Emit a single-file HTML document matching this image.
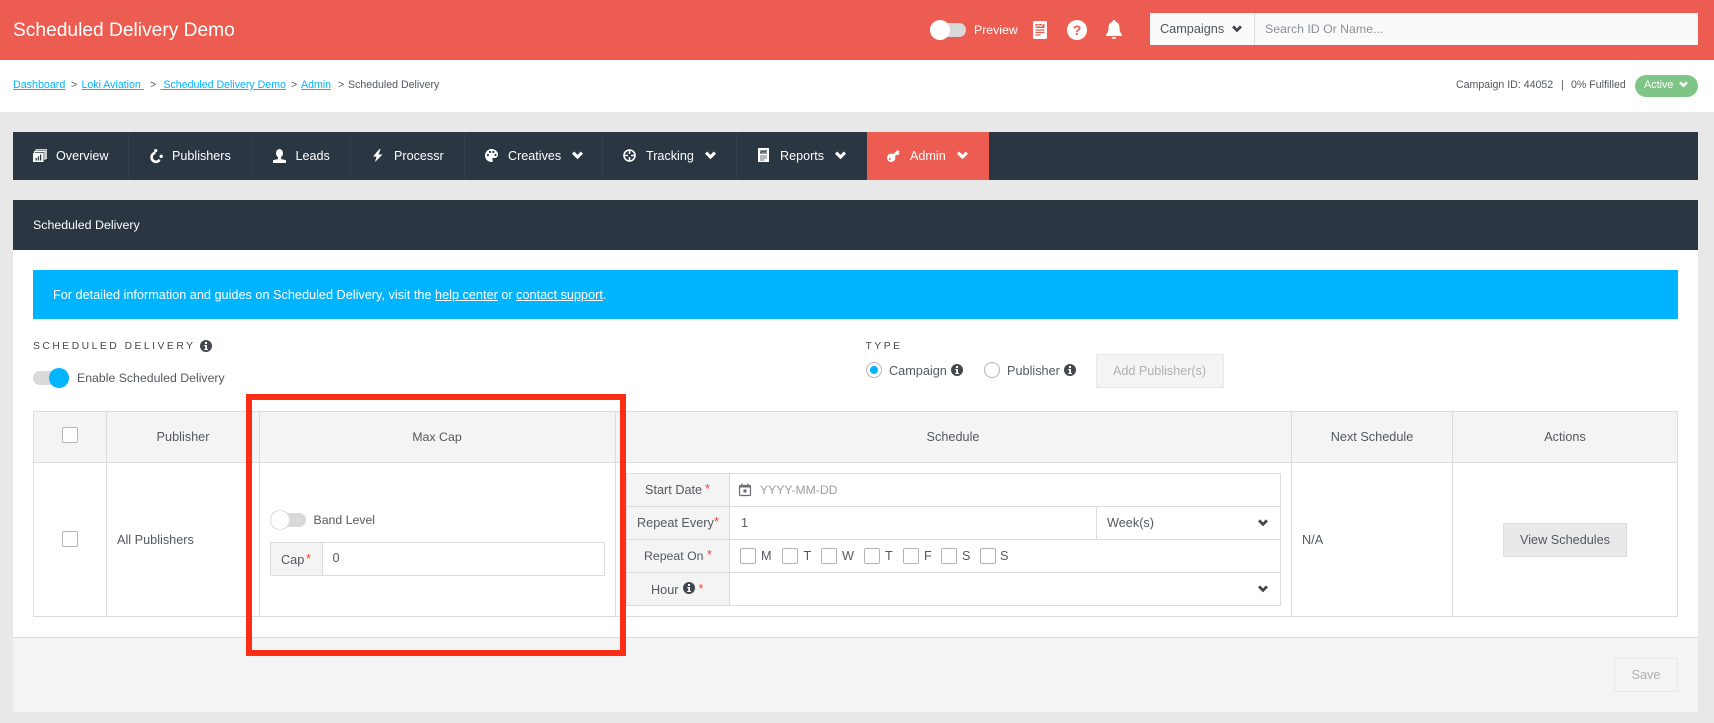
<!DOCTYPE html>
<html><head><meta charset="utf-8"><title>Scheduled Delivery</title>
<style>
html,body{margin:0;padding:0;width:1714px;height:723px;overflow:hidden;background:#e8e8e8;font-family:"Liberation Sans",sans-serif;color:#54595f;font-size:12.7px}
div,span,a,svg{position:absolute;box-sizing:border-box}
.t{white-space:nowrap;line-height:20px;height:20px}
a.t,.t a{color:inherit}
.n{color:#fff;top:146px;font-size:12.6px}
.b{font-size:10.6px;top:75px}
.b.l{color:#00b4ff;text-decoration:underline}
.h{top:427px}
.c{transform:translateX(-50%)}
.r{color:#ff3b30}
.cb{width:16px;height:16px;border:1px solid #b5b5b5;border-radius:2px;background:#fff}
.sep{top:132px;width:1px;height:48px;background:#333f4c}
.line{background:#dcdcdc}
svg{overflow:visible}
</style></head><body>
<svg width="0" height="0" style="left:0;top:0">
<defs>
<symbol id="chev" viewBox="0 0 10 8"><polygon points="0,2.400 2,0.400 5,3.400 8,0.400 10,2.400 5,7.400" fill="currentColor"/></symbol>
<symbol id="info" viewBox="0 0 12 12"><circle cx="6" cy="6" r="6" fill="currentColor"/><rect x="5" y="2" width="2" height="2" fill="#fff"/><path d="M4.200 5h2.800v4h1v1H4.200V9h1V6h-1z" fill="#fff"/></symbol>
</defs></svg>

<!-- header -->
<div style="left:0;top:0;width:1714px;height:60px;background:#ec5c50"></div>
<div class="t" style="left:13px;top:21px;font-size:19.200px;color:#fff">Scheduled Delivery Demo</div>
<div style="left:930px;top:23px;width:36px;height:14px;border-radius:7px;background:#d9d9d9"></div>
<div style="left:930px;top:20px;width:20px;height:20px;border-radius:50%;background:#fff"></div>
<div class="t" style="left:974px;top:20px;color:#fff;font-size:12.300px">Preview</div>
<svg style="left:1033px;top:21px" width="14" height="18" viewBox="0 0 14 18"><rect width="14" height="18" rx="1.500" fill="#fff"/><path d="M2.500 3h9v4h-9z" fill="#ec5c50"/><path d="M3 6l2.500-2 2 1.500L10 3.500" stroke="#fff" fill="none"/><path d="M2.500 9h9M2.500 11.500h9M2.500 14h5" stroke="#ec5c50" stroke-width="1.200"/></svg>
<svg style="left:1067px;top:20px" width="20" height="20" viewBox="0 0 20 20"><circle cx="10" cy="10" r="10" fill="#fff"/><text x="10" y="15" text-anchor="middle" font-family="Liberation Sans" font-weight="bold" font-size="14" fill="#ec5c50">?</text></svg>
<svg style="left:1106px;top:20px" width="16" height="20" viewBox="0 0 16 20"><path d="M8 0a1.500 1.500 0 0 1 1.500 1.800C12.500 2.500 13.500 5 13.500 8c0 3.500 1 5 2.500 6.500V16H0v-1.500C1.500 13 2.500 11.500 2.500 8c0-3 1-5.500 4-6.200A1.500 1.500 0 0 1 8 0z" fill="#fff"/><path d="M5.800 17h4.400a2.200 2.200 0 0 1-4.400 0z" fill="#fff"/></svg>

<div style="left:1150px;top:13px;width:548px;height:32px;background:#fafafa"></div>
<div style="left:1254px;top:13px;width:1px;height:32px;background:#dcdcdc"></div>
<div class="t" style="left:1160px;top:19px;font-size:12.700px;color:#50555b">Campaigns</div>
<svg style="left:1232px;top:25px;color:#44484e" width="10" height="8"><use href="#chev" width="10" height="8"/></svg>
<div class="t" style="left:1265px;top:19px;font-size:12.300px;color:#8b8f96">Search ID Or Name...</div>

<!-- breadcrumb bar -->
<div style="left:0;top:60px;width:1714px;height:52px;background:#fff"></div>
<a class="t b l" style="left:13px;font-size:10.700px">Dashboard</a>
<div class="t b" style="left:71px">&gt;</div>
<a class="t b l" style="left:81.500px">Loki Aviation&nbsp;</a>
<div class="t b" style="left:150px">&gt;</div>
<a class="t b l" style="left:160.500px">&nbsp;Scheduled Delivery Demo</a>
<div class="t b" style="left:291px">&gt;</div>
<a class="t b l" style="left:301px">Admin</a>
<div class="t b" style="left:338px">&gt;</div>
<div class="t b" style="left:348px">Scheduled Delivery</div>
<div class="t b" style="left:1456px">Campaign ID: 44052</div>
<div class="t b" style="left:1561px">|</div>
<div class="t b" style="left:1571px">0% Fulfilled</div>
<div style="left:1635px;top:75px;width:63px;height:22px;border-radius:11px;background:#7fc587"></div>
<div class="t b" style="left:1644px;color:#fff;font-size:10.800px">Active</div>
<svg style="left:1679px;top:81px;color:#fff" width="9" height="7"><use href="#chev" width="9" height="7"/></svg>

<!-- nav -->
<div style="left:13px;top:132px;width:1685px;height:48px;background:#2a3642"></div>
<div class="sep" style="left:128px"></div><div class="sep" style="left:251px"></div><div class="sep" style="left:350px"></div><div class="sep" style="left:464px"></div><div class="sep" style="left:602px"></div><div class="sep" style="left:736px"></div>
<div style="left:867px;top:132px;width:122px;height:48px;background:#ec5c50"></div>

<svg style="left:33px;top:149px" width="14" height="13" viewBox="0 0 14 13"><path d="M3 2.500V.5h10.500v9H11.500" fill="#8d949b" stroke="#c9cdd1" stroke-width="1"/><path d="M1.500 4V2.500H12V11" fill="#5f6871" stroke="#fff" stroke-width="1"/><rect x="0" y="4" width="10.500" height="9" fill="#fff"/><path d="M2.500 9h1.300v2.500H2.500zM4.800 7.500h1.300v4H4.800zM7 5.500h1.300v6H7z" fill="#2a3642"/></svg>
<div class="t n" style="left:56px">Overview</div>
<svg style="left:150px;top:149px" width="13" height="14" viewBox="0 0 13 14"><path d="M4.800 3.800C2.800 4.600 1.600 6.300 1.600 8.400c0 2.700 2 4.400 4.300 4.400 1.700 0 3-.9 3.500-2.300" fill="none" stroke="#fff" stroke-width="2.600"/><circle cx="5.800" cy="1.600" r="1.600" fill="#fff"/><path d="M4.800 2v3" stroke="#fff" stroke-width="1.400"/><circle cx="11.200" cy="7.300" r="1.700" fill="#fff"/></svg>
<div class="t n" style="left:172px">Publishers</div>
<svg style="left:273px;top:149px" width="13" height="14" viewBox="0 0 13 14"><ellipse cx="6.500" cy="4.300" rx="3.500" ry="4.300" fill="#fff"/><path d="M5 8h3v2l5 1.300V14H0v-2.700l5-1.300z" fill="#fff"/></svg>
<div class="t n" style="left:295.500px">Leads</div>
<svg style="left:372px;top:149px" width="11" height="13" viewBox="0 0 11 13"><path d="M7.500 0L1 7.500h3.500L3 13l7.500-7.500H6.500L8.500 0z" fill="#fff"/></svg>
<div class="t n" style="left:394px">Processr</div>
<svg style="left:485px;top:149px" width="13" height="13" viewBox="0 0 13 13"><path d="M6.500 0C10 0 13 2.500 13 5.700c0 2-1.600 3.300-3.500 3.300H8.300c-.7 0-1 .5-1 1 0 .7.500 1 .5 1.700 0 .8-.6 1.300-1.300 1.300C2.900 13 0 10 0 6.500S2.900 0 6.500 0z" fill="#fff"/><circle cx="3" cy="6" r="1.100" fill="#2a3642"/><circle cx="5" cy="3" r="1.100" fill="#2a3642"/><circle cx="8.300" cy="3" r="1.100" fill="#2a3642"/><circle cx="10.500" cy="6" r="1.100" fill="#2a3642"/></svg>
<div class="t n" style="left:508px">Creatives</div>
<svg style="left:572px;top:151px;color:#fff" width="11" height="9"><use href="#chev" width="11" height="9"/></svg>
<svg style="left:623px;top:149px" width="13" height="13" viewBox="0 0 13 13"><circle cx="6.500" cy="6.500" r="5.500" fill="none" stroke="#fff" stroke-width="1.600"/><path d="M6.500 1.500v3.500M6.500 8v3.500M1.500 6.500h3.500M8 6.500h3.500" stroke="#fff" stroke-width="1.500"/></svg>
<div class="t n" style="left:646px">Tracking</div>
<svg style="left:705px;top:151px;color:#fff" width="11" height="9"><use href="#chev" width="11" height="9"/></svg>
<svg style="left:758px;top:148px" width="11" height="14" viewBox="0 0 11 14"><rect width="11" height="14" fill="#fff"/><rect x="2" y="2" width="7" height="4" fill="#8d949b"/><path d="M2.500 5l2-2 1.500 1.200L8.500 2.500" fill="none" stroke="#2a3642" stroke-width=".7"/><path d="M2 8h7M2 10h7M2 12h4.500" stroke="#6a727a" stroke-width="1"/></svg>
<div class="t n" style="left:780px">Reports</div>
<svg style="left:835px;top:151px;color:#fff" width="11" height="9"><use href="#chev" width="11" height="9"/></svg>
<svg style="left:887px;top:149px" width="13" height="13" viewBox="0 0 13 13"><circle cx="4.200" cy="8.800" r="4.200" fill="#fff"/><path d="M5 6.500L10.500 1l2.300 1.500-1.200 1.500.8 1-1.400 1.200-1-.7L7 8z" fill="#fff"/><circle cx="2.800" cy="10" r="1" fill="#ec5c50"/></svg>
<div class="t n" style="left:910px">Admin</div>
<svg style="left:957px;top:151px;color:#fff" width="11" height="9"><use href="#chev" width="11" height="9"/></svg>

<!-- panel -->
<div style="left:13px;top:200px;width:1685px;height:50px;background:#2a3642"></div>
<div class="t" style="left:33px;top:215px;color:#fff;font-size:12.400px">Scheduled Delivery</div>
<div style="left:13px;top:250px;width:1685px;height:387px;background:#fff"></div>
<div style="left:33px;top:270px;width:1645px;height:49px;background:#00b4ff"></div>
<div class="t" style="left:53px;top:284.500px;color:#fff;font-size:12.700px">For detailed information and guides on Scheduled Delivery, visit the <a style="position:static;text-decoration:underline">help center</a> or <a style="position:static;text-decoration:underline">contact support</a>.</div>

<div class="t" style="left:33px;top:337px;font-size:10.300px;letter-spacing:2.520px;color:#44484e">SCHEDULED DELIVERY</div>
<svg style="left:200px;top:340px;color:#44484e" width="12" height="12"><use href="#info" width="12" height="12"/></svg>
<div style="left:33px;top:371px;width:36px;height:14px;border-radius:7px;background:#d9d9d9"></div>
<div style="left:49px;top:368px;width:20px;height:20px;border-radius:50%;background:#00b4ff"></div>
<div class="t" style="left:77px;top:368px;font-size:12.300px">Enable Scheduled Delivery</div>

<div class="t" style="left:865.500px;top:337px;font-size:10.300px;letter-spacing:2.520px;color:#44484e">TYPE</div>
<div style="left:866px;top:362px;width:16px;height:16px;border-radius:50%;border:1px solid #b5b5b5;background:#fff"></div>
<div style="left:870px;top:366px;width:8px;height:8px;border-radius:50%;background:#00b4ff"></div>
<div class="t" style="left:889px;top:361px">Campaign</div>
<svg style="left:951px;top:364px;color:#44484e" width="12" height="12"><use href="#info" width="12" height="12"/></svg>
<div style="left:983.500px;top:362px;width:16px;height:16px;border-radius:50%;border:1px solid #b5b5b5;background:#fff"></div>
<div class="t" style="left:1007px;top:361px">Publisher</div>
<svg style="left:1063.500px;top:364px;color:#44484e" width="12" height="12"><use href="#info" width="12" height="12"/></svg>
<div style="left:1096px;top:354px;width:128px;height:34px;background:#f4f4f4;border:1px solid #e8e8e8"></div>
<div class="t" style="left:1113px;top:361px;color:#aeb0b3;font-size:12.600px">Add Publisher(s)</div>

<!-- table -->
<div style="left:33px;top:411px;width:1645px;height:206px;border:1px solid #dcdcdc;background:#fff"></div>
<div style="left:34px;top:412px;width:1643px;height:51px;background:#f4f4f4;border-bottom:1px solid #dcdcdc"></div>
<div class="line" style="left:106px;top:411px;width:1px;height:206px"></div>
<div class="line" style="left:259px;top:411px;width:1px;height:206px"></div>
<div class="line" style="left:615px;top:411px;width:1px;height:206px"></div>
<div class="line" style="left:1291px;top:411px;width:1px;height:206px"></div>
<div class="line" style="left:1452px;top:411px;width:1px;height:206px"></div>
<div class="cb" style="left:62px;top:427px"></div>
<div class="t h c" style="left:183px">Publisher</div>
<div class="t h c" style="left:437px;font-size:12.400px">Max Cap</div>
<div class="t h c" style="left:953px">Schedule</div>
<div class="t h c" style="left:1372px">Next Schedule</div>
<div class="t h c" style="left:1565px">Actions</div>

<div class="cb" style="left:62px;top:531px"></div>
<div class="t" style="left:117px;top:530px">All Publishers</div>

<div style="left:270px;top:513px;width:36px;height:14px;border-radius:7px;background:#d9d9d9"></div>
<div style="left:270px;top:510px;width:20px;height:20px;border-radius:50%;background:#fff;border:1px solid #ddd"></div>
<div class="t" style="left:313.500px;top:510px;font-size:12.300px">Band Level</div>
<div style="left:270px;top:542px;width:335px;height:34px;border:1px solid #dcdcdc;background:#fff"></div>
<div style="left:271px;top:543px;width:52px;height:32px;background:#f4f4f4;border-right:1px solid #dcdcdc"></div>
<div class="t" style="left:281px;top:550px">Cap</div>
<div class="t r" style="left:306px;top:549px">*</div>
<div class="t" style="left:332.500px;top:548px">0</div>

<!-- schedule grid -->
<div style="left:626px;top:473px;width:655px;height:133px;border:1px solid #dcdcdc;background:#fff"></div>
<div style="left:627px;top:474px;width:103px;height:131px;background:#f4f4f4;border-right:1px solid #dcdcdc"></div>
<div class="line" style="left:627px;top:506px;width:653px;height:1px"></div>
<div class="line" style="left:627px;top:539px;width:653px;height:1px"></div>
<div class="line" style="left:627px;top:572px;width:653px;height:1px"></div>
<div class="line" style="left:1096px;top:507px;width:1px;height:32px"></div>

<div class="t" style="left:645px;top:480px">Start Date</div><div class="t r" style="left:705px;top:479px">*</div>
<div class="t" style="left:637px;top:513px">Repeat Every</div><div class="t r" style="left:714px;top:512px">*</div>
<div class="t" style="left:644px;top:546px;font-size:12.300px">Repeat On</div><div class="t r" style="left:707px;top:545px">*</div>
<div class="t" style="left:651px;top:580px">Hour</div>
<svg style="left:683px;top:582px;color:#44484e" width="12" height="12"><use href="#info" width="12" height="12"/></svg>
<div class="t r" style="left:698.500px;top:579px">*</div>

<svg style="left:739px;top:483px" width="12" height="13" viewBox="0 0 12 13"><path d="M1.500 2.500h9a1 1 0 0 1 1 1v8a1 1 0 0 1-1 1h-9a1 1 0 0 1-1-1v-8a1 1 0 0 1 1-1z" fill="none" stroke="#6a6e73" stroke-width="1.200"/><path d="M1 2.500h10V4.500H1z" fill="#6a6e73"/><path d="M3 .5v2M9 .5v2" stroke="#6a6e73" stroke-width="1.200"/><rect x="4.500" y="6.500" width="3" height="3" fill="#6a6e73"/></svg>
<div class="t" style="left:760px;top:480px;color:#9a9da1;font-size:12.200px">YYYY-MM-DD</div>
<div class="t" style="left:741px;top:513px">1</div>
<div class="t" style="left:1107px;top:513px">Week(s)</div>
<svg style="left:1258px;top:519px;color:#44484e" width="10" height="8"><use href="#chev" width="10" height="8"/></svg>
<svg style="left:1258px;top:585px;color:#44484e" width="10" height="8"><use href="#chev" width="10" height="8"/></svg>

<div class="cb" style="left:740px;top:548px"></div><div class="t" style="left:761px;top:546px">M</div>
<div class="cb" style="left:782px;top:548px"></div><div class="t" style="left:803.500px;top:546px">T</div>
<div class="cb" style="left:821px;top:548px"></div><div class="t" style="left:842px;top:546px">W</div>
<div class="cb" style="left:864px;top:548px"></div><div class="t" style="left:885px;top:546px">T</div>
<div class="cb" style="left:903px;top:548px"></div><div class="t" style="left:924px;top:546px">F</div>
<div class="cb" style="left:941px;top:548px"></div><div class="t" style="left:962px;top:546px">S</div>
<div class="cb" style="left:980px;top:548px"></div><div class="t" style="left:1000px;top:546px">S</div>

<div class="t" style="left:1302px;top:530px">N/A</div>
<div style="left:1503px;top:523px;width:124px;height:34px;background:#e9e9e9;border:1px solid #dcdcdc"></div>
<div class="t c" style="left:1565px;top:530px">View Schedules</div>

<!-- footer -->
<div style="left:13px;top:637px;width:1685px;height:75px;background:#f4f4f4;border-top:1px solid #dcdcdc"></div>
<div style="left:1614px;top:658px;width:64px;height:34px;background:#f4f4f4;border:1px solid #e8e8e8"></div>
<div class="t c" style="left:1646px;top:665px;color:#aeb0b3">Save</div>

<!-- annotation -->
<div style="left:246px;top:394px;width:380px;height:262px;border:6px solid #ff2e14"></div>
</body></html>
